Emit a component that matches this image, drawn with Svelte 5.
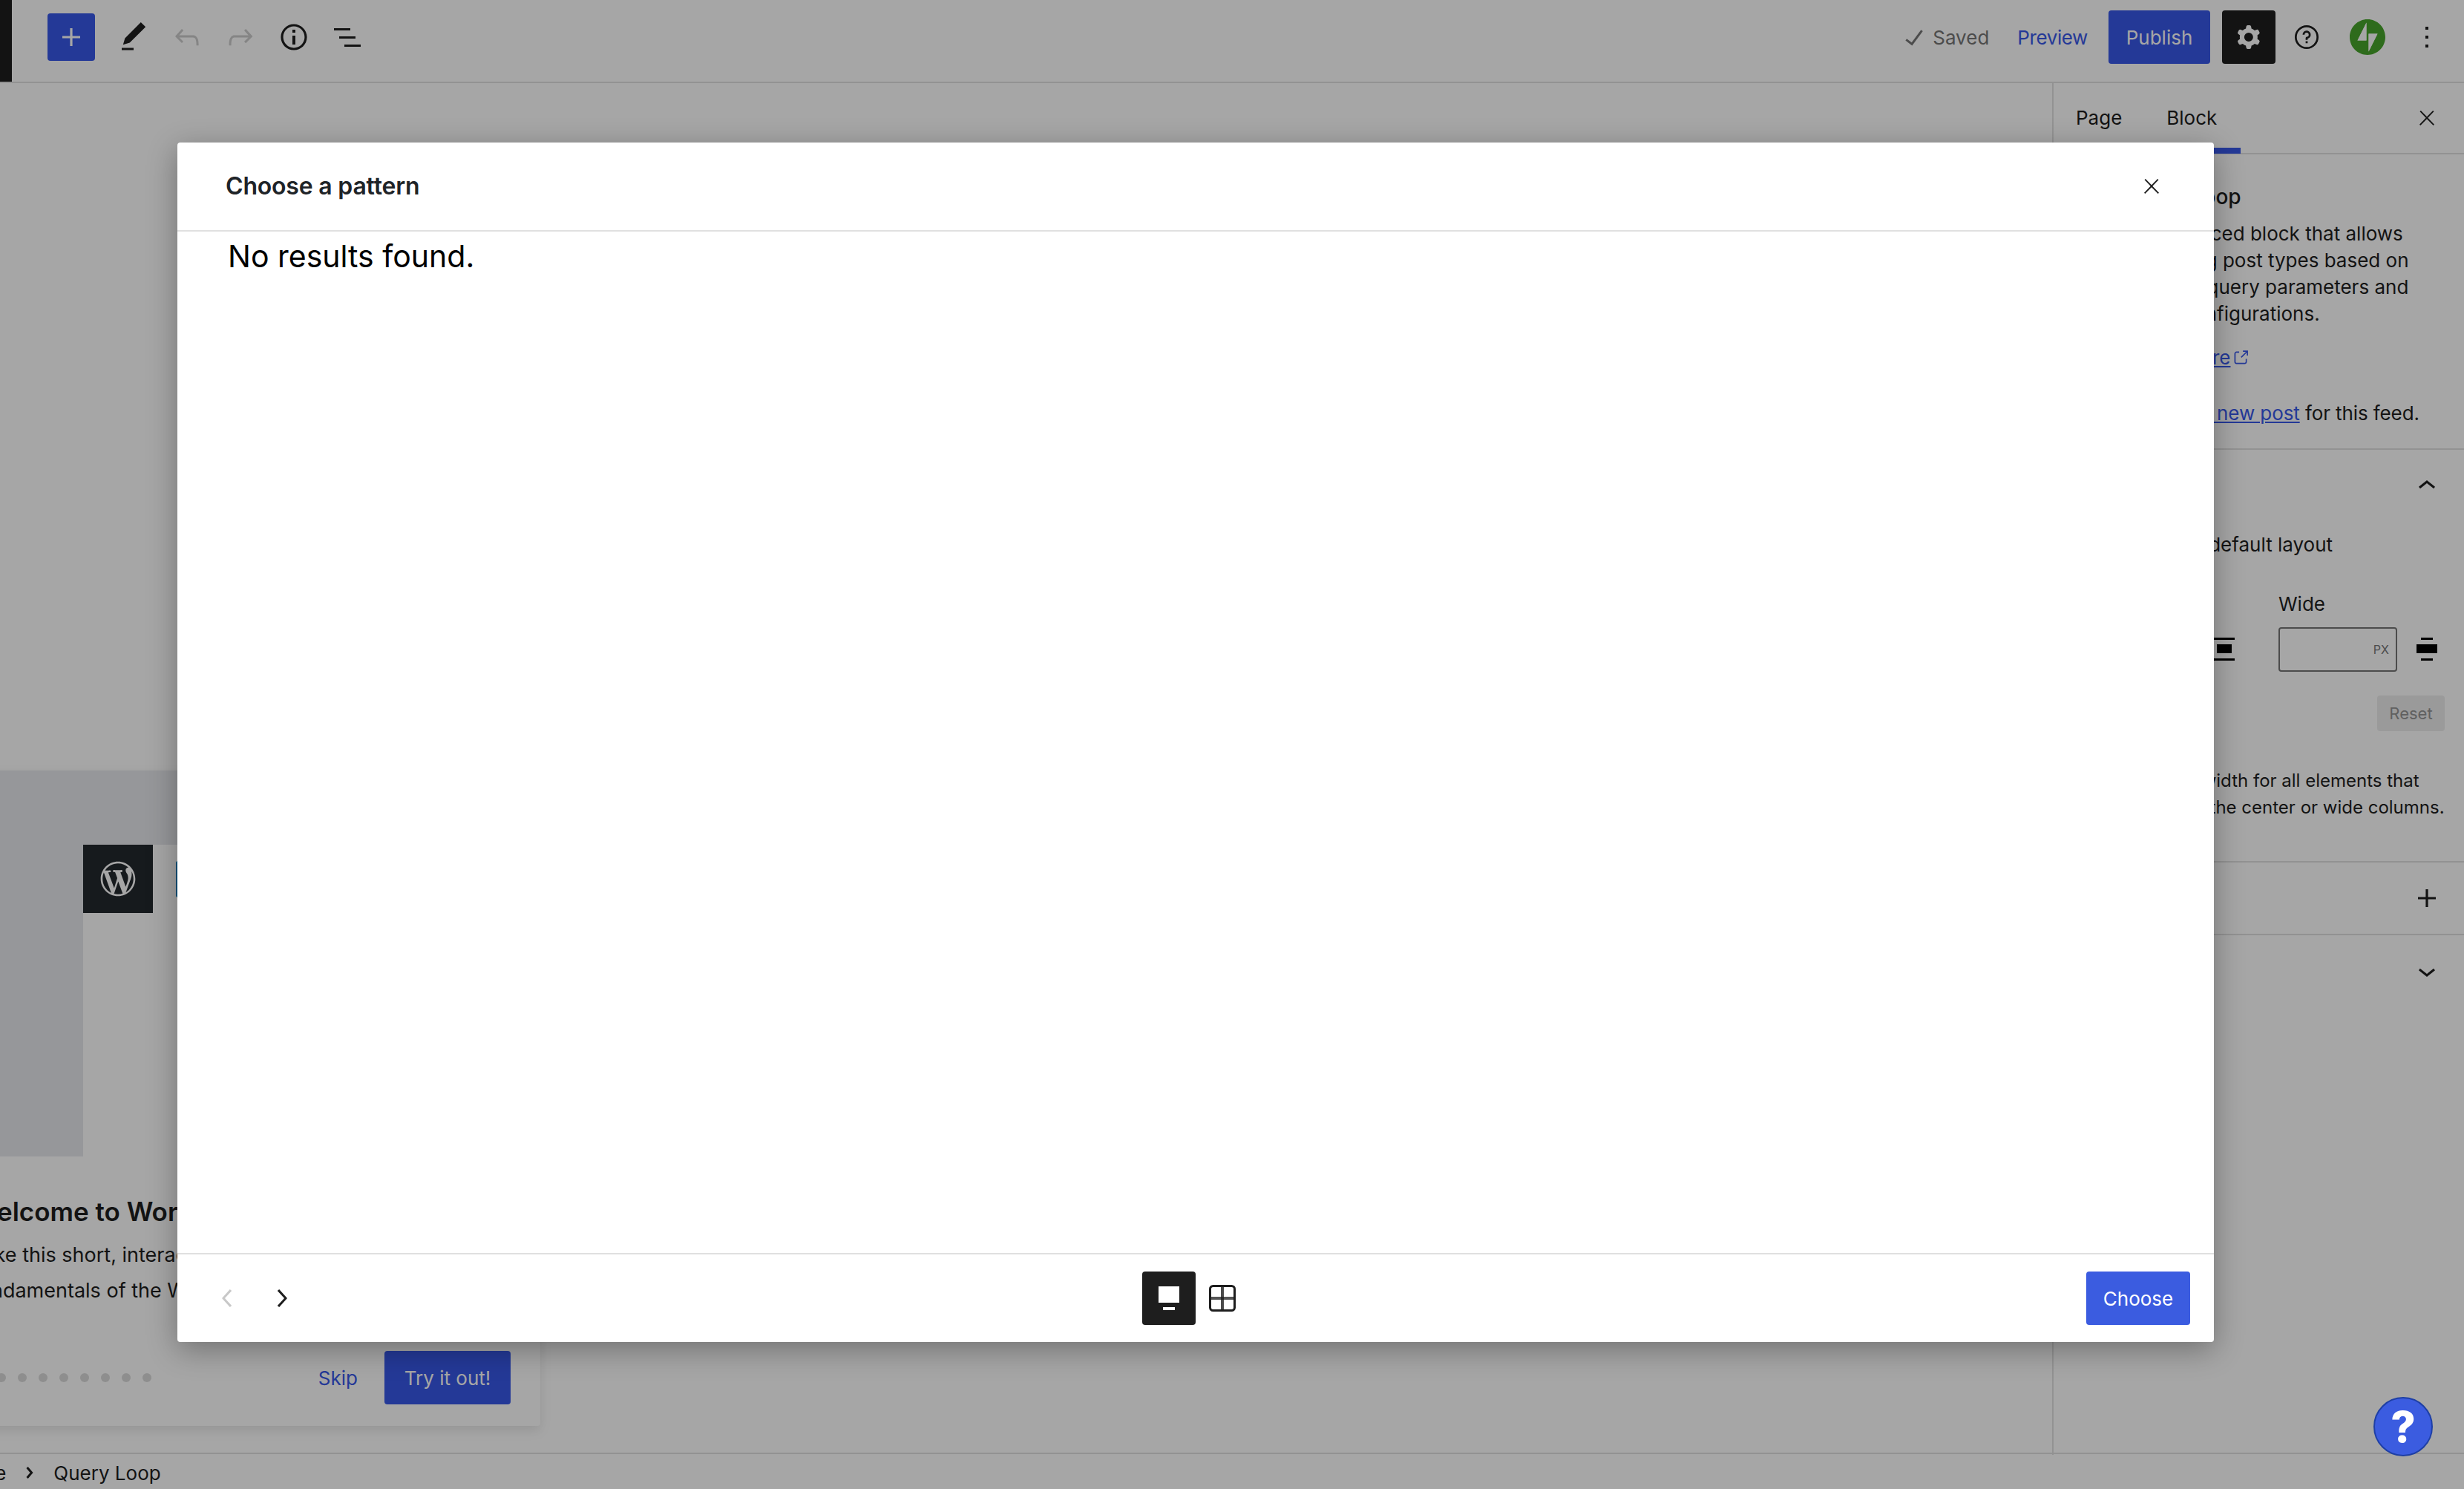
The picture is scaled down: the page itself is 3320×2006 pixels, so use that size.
<script>
	const dots = [0, 1, 2, 3, 4, 5, 6, 7, 8];
	const wordpress = "M20 10c0-5.51-4.49-10-10-10C4.48 0 0 4.49 0 10c0 5.52 4.48 10 10 10 5.51 0 10-4.48 10-10zM7.78 15.37L4.37 6.22c.55-.02 1.17-.08 1.17-.08.5-.06.44-1.13-.06-1.11 0 0-1.45.11-2.37.11-.18 0-.37 0-.58-.01C4.12 2.69 6.87 1.11 10 1.11c2.33 0 4.45.87 6.05 2.34-.68-.11-1.65.39-1.65 1.58 0 .74.45 1.36.9 2.1.35.61.55 1.36.55 2.46 0 1.49-1.4 5-1.4 5l-3.03-8.37c.54-.02.82-.17.82-.17.5-.05.44-1.25-.06-1.22 0 0-1.44.12-2.38.12-.87 0-2.33-.12-2.33-.12-.5-.03-.56 1.2-.06 1.22l.92.08 1.26 3.41zM17.41 10c.24-.64.74-1.87.43-4.25.7 1.29 1.05 2.71 1.05 4.25 0 3.29-1.73 6.24-4.4 7.78.97-2.59 1.94-5.2 2.92-7.78zM6.1 18.09C3.12 16.65 1.11 13.53 1.11 10c0-1.3.23-2.48.72-3.59C3.25 10.3 4.67 14.2 6.1 18.09zm4.03-6.63l2.58 6.98c-.86.29-1.76.45-2.71.45-.79 0-1.57-.11-2.29-.33.81-2.38 1.62-4.74 2.42-7.1z";
	const close = "M13 11.8l6.1-6.3-1-1-6.1 6.2-6.1-6.2-1 1 6.1 6.3-6.5 6.7 1 1 6.5-6.6 6.5 6.6 1-1z";
	const plus = "M18 11.2h-5.2V6h-1.6v5.2H6v1.6h5.2V18h1.6v-5.2H18z";
</script>

<div class="app">
	<div class="editor">
		<!-- top toolbar -->
		<header class="topbar">
			<div class="site-corner"></div>
			<button class="inserter" aria-label="Add block">
				<svg viewBox="0 0 24 24" width="48" height="48"><path d={plus} /></svg>
			</button>
			<div class="tools">
				<span class="tool"><svg viewBox="0 0 24 24" width="48" height="48"><path d="M20.1 5.1L16.9 2 6.2 12.7l-1.3 4.4 4.5-1.3L20.1 5.1zM4 20.8h8v-1.5H4v1.5z" /></svg></span>
				<span class="tool muted"><svg viewBox="0 0 24 24" width="48" height="48"><path d="M18.3 11.7c-.6-.6-1.4-.9-2.3-.9H6.7l2.9-3.3-1.1-1-4.5 5L8.5 16l1-1-2.7-2.7H16c.5 0 .9.2 1.3.5 1 1 1 3.4 1 4.5v.3h1.5v-.2c0-1.5 0-4.3-1.5-5.7z" /></svg></span>
				<span class="tool muted"><svg viewBox="0 0 24 24" width="48" height="48"><path d="M15.6 6.5l-1.1 1 2.9 3.3H8c-.9 0-1.7.3-2.3.9-1.4 1.5-1.4 4.2-1.4 5.7v.2h1.5v-.3c0-1.1 0-3.5 1-4.5.3-.3.7-.5 1.3-.5h9.2L14.5 15l1.1 1.1 4.6-4.6-4.6-5z" /></svg></span>
				<span class="tool"><svg viewBox="0 0 24 24" width="48" height="48"><path d="M12 3.2c-4.8 0-8.8 3.9-8.8 8.8 0 4.8 3.9 8.8 8.8 8.8 4.8 0 8.8-3.9 8.8-8.8 0-4.8-4-8.8-8.8-8.8zm0 16c-4 0-7.2-3.3-7.2-7.2C4.8 8 8 4.8 12 4.8s7.2 3.3 7.2 7.2c0 4-3.2 7.2-7.2 7.2zM11 17h2v-6h-2v6zm0-8h2V7h-2v2z" /></svg></span>
				<span class="tool"><svg viewBox="0 0 24 24" width="48" height="48"><path d="M3 6h11v1.5H3V6zm3.5 5.5h11V13h-11v-1.5zM21 17H10v1.5h11V17z" /></svg></span>
			</div>
			<div class="actions">
				<span class="saved">
					<svg viewBox="0 0 24 24" width="48" height="48"><path d="M16.7 7.1l-6.3 8.5-3.3-2.5-.9 1.2 4.5 3.4L17.9 8z" /></svg>
					Saved
				</span>
				<span class="preview">Preview</span>
				<button class="publish">Publish</button>
				<button class="settings" aria-label="Settings">
					<svg viewBox="0 0 24 24" width="48" height="48"><path fill-rule="evenodd" clip-rule="evenodd" d="M10.289 4.836A1 1 0 0111.275 4h1.306a1 1 0 01.987.836l.244 1.466c.787.26 1.503.679 2.108 1.218l1.393-.522a1 1 0 011.216.437l.653 1.13a1 1 0 01-.23 1.273l-1.148.944a6.025 6.025 0 010 2.435l1.149.946a1 1 0 01.23 1.272l-.653 1.13a1 1 0 01-1.216.437l-1.394-.522c-.605.54-1.32.958-2.108 1.218l-.244 1.466a1 1 0 01-.987.836h-1.306a1 1 0 01-.986-.836l-.244-1.466a5.995 5.995 0 01-2.108-1.218l-1.394.522a1 1 0 01-1.217-.436l-.653-1.131a1 1 0 01.23-1.272l1.149-.946a6.026 6.026 0 010-2.435l-1.148-.944a1 1 0 01-.23-1.272l.653-1.131a1 1 0 011.217-.437l1.393.522a5.994 5.994 0 012.108-1.218l.244-1.466zM14.929 12a3 3 0 11-6 0 3 3 0 016 0z" /></svg>
				</button>
				<span class="tool help"><svg viewBox="0 0 24 24" width="44" height="44"><path d="M12 4.75a7.25 7.25 0 100 14.5 7.25 7.25 0 000-14.5zM3.25 12a8.75 8.75 0 1117.5 0 8.75 8.75 0 01-17.5 0zM12 8.75a1.5 1.5 0 01.167 2.99c-.465.052-.917.44-.917 1.01V14h1.5v-.845A3 3 0 109 10.25h1.5a1.5 1.5 0 011.5-1.5zM11.25 15v1.5h1.5V15h-1.5z" /></svg></span>
				<span class="tool jetpack"><svg viewBox="0 0 32 32" width="48" height="48"><path fill="#48a52b" d="M16 0C7.2 0 0 7.2 0 16s7.2 16 16 16 16-7.2 16-16S24.8 0 16 0zM15 19H7l8-16v16zM17 29V13h8l-8 16z" /><path fill="#fff" d="M15 19H7l8-16zM17 29V13h8z" /></svg></span>
				<span class="tool more"><svg viewBox="0 0 24 24" width="48" height="48"><path d="M13 19h-2v-2h2v2zm0-6h-2v-2h2v2zm0-6h-2V5h2v2z" /></svg></span>
			</div>
		</header>

		<div class="workspace">
			<!-- canvas with the welcome guide -->
			<main class="canvas">
				<section class="guide">
					<div class="guide-image">
						<div class="guide-screen">
							<div class="guide-logo">
								<svg viewBox="-2 -2 24 24" width="56" height="56"><path d={wordpress} /></svg>
							</div>
							<div class="guide-blue"></div>
						</div>
					</div>
					<div class="guide-body">
						<h2>Welcome to WordPress</h2>
						<p>Take this short, interactive tour to learn the<br />fundamentals of the WordPress editor.</p>
						<div class="guide-footer">
							<div class="dots">
								{#each dots as d (d)}
									<span class="dot"></span>
								{/each}
							</div>
							<span class="skip">Skip</span>
							<button class="try">Try it out!</button>
						</div>
					</div>
				</section>
			</main>

			<!-- settings sidebar -->
			<aside class="sidebar">
				<div class="tabs">
					<span class="tab">Page</span>
					<span class="tab active">Block</span>
					<svg class="tabs-close" viewBox="0 0 24 24" width="32" height="32"><path d={close} /></svg>
				</div>

				<div class="block-card">
					<div class="block-text">
						<h3>Query Loop</h3>
						<p class="block-desc">An advanced block that allows displaying post types based on different query parameters and visual configurations.</p>
						<p class="learn"><a href="#top">Learn more</a>
							<svg viewBox="0 0 24 24" width="26" height="26"><path d="M18.2 17c0 .7-.6 1.2-1.2 1.2H7c-.7 0-1.2-.6-1.2-1.2V7c0-.7.6-1.2 1.2-1.2h3.2V4.2H7C5.5 4.2 4.2 5.5 4.2 7v10c0 1.5 1.2 2.8 2.8 2.8h10c1.5 0 2.8-1.2 2.8-2.8v-3.6h-1.5V17zM14.9 3v1.5h3.7l-6.4 6.4 1.1 1.1 6.4-6.4v3.7h1.5V3h-6.3z" /></svg>
						</p>
						<p class="create"><a href="#top">Create a new post</a> for this feed.</p>
					</div>
				</div>

				<div class="panel open">
					<div class="panel-head">
						<span>Layout</span>
						<svg viewBox="0 0 24 24" width="48" height="48"><path d="M6.5 12.4L12 8l5.5 4.4-.9 1.2L12 10l-4.5 3.6-1-1.2z" /></svg>
					</div>
					<div class="panel-body">
						<div class="inherit">
							<span class="toggle"></span>
							<span>Inherit default layout</span>
						</div>
						<div class="fields">
							<div class="field">
								<span class="field-label">Content</span>
								<div class="field-row">
									<div class="unit-input"><span>PX</span></div>
									<svg viewBox="0 0 28 32" width="28" height="32"><path d="M0 1h28v3H0zM4 10h20v12H4zM0 29h28v3H0z" /></svg>
								</div>
							</div>
							<div class="field">
								<span class="field-label">Wide</span>
								<div class="field-row">
									<div class="unit-input"><span>PX</span></div>
									<svg viewBox="0 0 28 32" width="28" height="32"><path d="M6 1h16v3H6zM0 10h28v12H0zM6 29h16v3H6z" /></svg>
								</div>
							</div>
						</div>
						<div class="reset-row"><span class="reset">Reset</span></div>
						<p class="panel-desc">Customize the width for all elements that<br />are assigned to the center or wide columns.</p>
					</div>
				</div>

				<div class="panel">
					<div class="panel-head">
						<span>Dimensions</span>
						<svg viewBox="0 0 24 24" width="48" height="48"><path d={plus} /></svg>
					</div>
				</div>

				<div class="panel last">
					<div class="panel-head">
						<span>Advanced</span>
						<svg viewBox="0 0 24 24" width="48" height="48"><path d="M17.5 11.6L12 16l-5.5-4.4.9-1.2L12 14l4.5-3.6 1 1.2z" /></svg>
					</div>
				</div>
			</aside>
		</div>

		<!-- breadcrumb bar -->
		<footer class="crumbs">
			<span class="crumb-first">Page</span>
			<svg viewBox="0 0 24 24" width="48" height="48"><path d="M10.8622 8.04053L14.2805 12.0286L10.8622 16.0167L9.72327 15.0405L12.3049 12.0286L9.72327 9.01672L10.8622 8.04053Z" /></svg>
			<span>Query Loop</span>
		</footer>
	</div>

	<!-- modal over everything -->
	<div class="overlay">
		<div class="modal">
			<div class="modal-head">
				<h1>Choose a pattern</h1>
				<svg viewBox="0 0 24 24" width="32" height="32"><path d={close} /></svg>
			</div>
			<div class="modal-body">
				<p>No results found.</p>
			</div>
			<div class="modal-foot">
				<div class="pager">
					<span class="page-btn disabled"><svg viewBox="0 0 24 24" width="48" height="48"><path d="M14.6 7l-1.2-1L8 12l5.4 6 1.2-1-4.6-5z" /></svg></span>
					<span class="page-btn"><svg viewBox="0 0 24 24" width="48" height="48"><path d="M10.6 6L9.4 7l4.6 5-4.6 5 1.2 1 5.4-6z" /></svg></span>
				</div>
				<div class="views">
					<span class="view active">
						<svg viewBox="0 0 28 32" width="28" height="32"><path d="M0 0h28v22H0zM6 28h16v4H6z" /></svg>
					</span>
					<span class="view">
						<svg class="grid-icon" viewBox="0 0 36 36" width="36" height="36"><rect x="1.5" y="1.5" width="33" height="33" rx="4" /><path class="grid-lines" d="M17 2v32M19 2v32M2 17h32M2 19h32" /></svg>
					</span>
				</div>
				<div class="choose-wrap"><button class="choose">Choose</button></div>
			</div>
		</div>
	</div>

	<div class="help-bubble">?</div>
</div>

<style>
	:global(body) {
		margin: 0;
	}

	.app {
		position: relative;
		width: 3320px;
		height: 2006px;
		overflow: hidden;
		font-family: Inter, "Noto Sans", sans-serif;
		font-size: 26px;
		color: #1e1e1e;
		background: #fff;
	}

	.editor {
		display: flex;
		flex-direction: column;
		height: 100%;
	}

	h1, h2, h3, p {
		margin: 0;
	}

	button {
		font: inherit;
		border: none;
		border-radius: 4px;
		padding: 0;
	}

	svg {
		display: block;
		flex: none;
		fill: currentColor;
	}

	a {
		color: #3858e9;
	}

	/* top toolbar */
	.topbar {
		display: flex;
		align-items: center;
		flex: none;
		height: 112px;
		box-sizing: border-box;
		padding-bottom: 10px;
		border-bottom: 2px solid #e0e0e0;
	}

	.site-corner {
		width: 16px;
		height: 110px;
		margin-bottom: -10px;
		background: #1e1e1e;
		margin-right: 48px;
	}

	.inserter {
		width: 64px;
		height: 64px;
		display: flex;
		align-items: center;
		justify-content: center;
		background: #3858e9;
		color: #fff;
		margin-right: 16px;
	}

	.tools {
		display: flex;
	}

	.tool {
		width: 72px;
		height: 72px;
		display: flex;
		align-items: center;
		justify-content: center;
	}

	.tool.muted {
		color: #ccc;
	}

	.actions {
		display: flex;
		align-items: center;
		margin-left: auto;
		padding-right: 14px;
	}

	.saved {
		display: flex;
		align-items: center;
		color: #757575;
		margin-right: 38px;
	}

	.saved svg {
		margin-right: 1px;
	}

	.preview {
		color: #3858e9;
		letter-spacing: -0.4px;
		margin-right: 28px;
	}

	.publish {
		width: 137px;
		height: 72px;
		background: #3858e9;
		color: #fff;
		margin-right: 16px;
	}

	.settings {
		width: 72px;
		height: 72px;
		display: flex;
		align-items: center;
		justify-content: center;
		background: #1e1e1e;
		color: #fff;
		margin-right: 6px;
	}

	.help {
		margin-right: 10px;
	}

	.jetpack {
		margin-right: 8px;
	}

	/* workspace */
	.workspace {
		flex: 1;
		display: flex;
		min-height: 0;
	}

	.canvas {
		position: relative;
		flex: 1;
	}

	.guide {
		position: absolute;
		left: -84px;
		top: 926px;
		width: 812px;
		height: 883px;
		border-radius: 4px;
		box-shadow: 0 6px 16px rgba(0, 0, 0, 0.1);
		background: #fff;
		display: flex;
		flex-direction: column;
	}

	.guide-image {
		height: 520px;
		flex: none;
		padding: 100px 0 0 196px;
		box-sizing: border-box;
		background: #e6e9ed;
		display: flex;
	}

	.guide-screen {
		flex: 1;
		display: flex;
		align-items: flex-start;
		background: #fff;
	}

	.guide-logo {
		width: 94px;
		height: 92px;
		display: flex;
		align-items: center;
		justify-content: center;
		background: #23282d;
		color: #fff;
	}

	.guide-blue {
		width: 60px;
		height: 49px;
		margin: 22px 0 0 31px;
		border-radius: 3px;
		background: #007cba;
	}

	.guide-body {
		padding: 50px 40px 0 46px;
	}

	.guide-body h2 {
		font-size: 35px;
		font-weight: 600;
		line-height: 48px;
		white-space: nowrap;
	}

	.guide-body p {
		font-size: 27px;
		margin-top: 11px;
		line-height: 48px;
		white-space: nowrap;
	}

	.guide-footer {
		display: flex;
		align-items: center;
		margin-top: 57px;
	}

	.dots {
		display: flex;
		gap: 16px;
		margin-left: 6px;
		margin-right: auto;
	}

	.dot {
		width: 12px;
		height: 12px;
		border-radius: 50%;
		background: #dadada;
	}

	.skip {
		color: #3858e9;
		margin-right: 36px;
	}

	.try {
		width: 170px;
		height: 72px;
		background: #3858e9;
		color: #fff;
	}

	/* sidebar */
	.sidebar {
		width: 553px;
		flex: none;
		border-left: 2px solid #e0e0e0;
	}

	.tabs {
		position: relative;
		display: flex;
		height: 94px;
		border-bottom: 2px solid #e0e0e0;
	}

	.tab {
		position: relative;
		padding: 0 32px;
		line-height: 94px;
	}

	.tab:first-child {
		padding: 0 28px 0 30px;
	}

	.tab.active::after {
		content: "";
		position: absolute;
		left: 0;
		right: 0;
		bottom: -1px;
		height: 8px;
		background: #3858e9;
	}

	.tabs-close {
		position: absolute;
		right: 34px;
		top: 31px;
	}

	.block-card {
		height: 398px;
		box-sizing: border-box;
		padding: 39px 32px 0 96px;
		border-bottom: 2px solid #e0e0e0;
	}

	.block-text h3 {
		font-size: 28px;
		font-weight: 500;
		line-height: 36px;
	}

	.block-text p {
		line-height: 36px;
	}

	.block-desc {
		margin-top: 14px !important;
		width: 411px;
	}

	.learn {
		display: flex;
		align-items: center;
		gap: 1px;
		margin-top: 23px !important;
		margin-left: 2px;
	}

	.learn svg {
		color: #3858e9;
	}

	.create {
		margin-top: 39px !important;
		margin-left: 14px;
		letter-spacing: -0.1px;
	}

	.panel {
		border-bottom: 2px solid #e0e0e0;
	}

	.panel.last {
		border-bottom: none;
	}

	.panel-head {
		display: flex;
		align-items: center;
		justify-content: space-between;
		height: 96px;
		padding: 0 26px 0 30px;
		font-weight: 500;
	}

	.panel.open .panel-head {
		height: 98px;
	}

	.panel-body {
		padding: 12px 32px 54px 30px;
	}

	.inherit {
		display: flex;
		align-items: center;
		gap: 22px;
		line-height: 36px;
	}

	.toggle {
		width: 72px;
		height: 36px;
		border-radius: 18px;
		border: 2px solid #1e1e1e;
		box-sizing: border-box;
	}

	.fields {
		display: flex;
		gap: 59px;
		margin-top: 44px;
	}

	.field-label {
		display: block;
		line-height: 36px;
		margin-bottom: 13px;
	}

	.field-row {
		display: flex;
		align-items: center;
		gap: 26px;
	}

	.field-row svg {
		color: #000;
		position: relative;
		top: -1px;
	}

	.unit-input {
		width: 160px;
		height: 60px;
		box-sizing: border-box;
		border: 2px solid #757575;
		border-radius: 4px;
		display: flex;
		align-items: center;
		justify-content: flex-end;
		padding-right: 9px;
		font-size: 16px;
		color: #757575;
	}

	.reset-row {
		display: flex;
		justify-content: flex-end;
		margin: 32px -6px 0 0;
	}

	.reset {
		width: 91px;
		height: 48px;
		line-height: 48px;
		text-align: center;
		font-size: 22px;
		border-radius: 4px;
		background: #ededed;
		color: #949494;
	}

	.panel-desc {
		font-size: 24px;
		line-height: 36px;
		margin-top: 49px;
		white-space: nowrap;
	}

	/* breadcrumb */
	.crumbs {
		flex: none;
		display: flex;
		align-items: center;
		gap: 8px;
		height: 44px;
		border-top: 2px solid #e0e0e0;
		padding-top: 3px;
		box-sizing: content-box;
		margin-top: -3px;
		overflow: hidden;
	}

	.crumb-first {
		margin-left: -54px;
	}

	/* modal */
	.overlay {
		position: absolute;
		inset: 0;
		background: rgba(0, 0, 0, 0.35);
	}

	.modal {
		position: absolute;
		left: 239px;
		top: 192px;
		width: 2744px;
		height: 1616px;
		display: flex;
		flex-direction: column;
		background: #fff;
		border-radius: 4px;
		box-shadow: 0 10px 40px rgba(0, 0, 0, 0.32);
	}

	.modal-head {
		flex: none;
		height: 118px;
		display: flex;
		align-items: center;
		justify-content: space-between;
		padding: 0 68px 0 65px;
		border-bottom: 2px solid #e0e0e0;
	}

	.modal-head h1 {
		font-size: 32px;
		font-weight: 600;
		letter-spacing: -0.2px;
		color: #1f2428;
		line-height: 40px;
	}

	.modal-body {
		flex: 1;
		padding: 8px 68px 0;
	}

	.modal-body p {
		font-size: 41px;
		color: #000;
	}

	.modal-foot {
		flex: none;
		height: 120px;
		box-sizing: border-box;
		display: grid;
		grid-template-columns: 1fr auto 1fr;
		align-items: center;
		padding: 0 32px;
		border-top: 2px solid #e0e0e0;
	}

	.pager, .views {
		display: flex;
	}

	.page-btn, .view {
		width: 72px;
		height: 72px;
		display: flex;
		align-items: center;
		justify-content: center;
		border-radius: 4px;
	}

	.page-btn.disabled {
		color: #c8c8c8;
	}

	.view.active {
		background: #1e1e1e;
		color: #fff;
	}

	.grid-icon {
		fill: none;
		stroke: #1e1e1e;
		stroke-width: 3;
	}

	.grid-lines {
		stroke-width: 1.6;
	}

	.choose-wrap {
		display: flex;
		justify-content: flex-end;
	}

	.choose {
		width: 140px;
		height: 72px;
		background: #3b5ce0;
		color: #fff;
	}

	.help-bubble {
		position: absolute;
		left: 3198px;
		top: 1882px;
		width: 80px;
		height: 80px;
		box-sizing: border-box;
		border: 2px solid #1e3fa5;
		border-radius: 50%;
		background: #3b5ce0;
		color: #fff;
		font-size: 58px;
		font-weight: 800;
		line-height: 76px;
		text-align: center;
	}
</style>
